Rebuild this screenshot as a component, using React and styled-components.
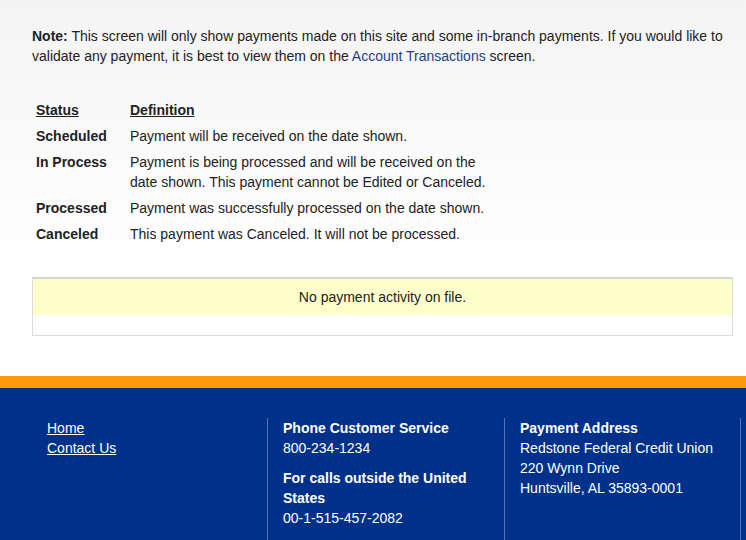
import React from 'react';
import styled, { createGlobalStyle } from 'styled-components';

const GlobalStyle = createGlobalStyle`
  html, body {
    margin: 0;
    padding: 0;
  }
  body {
    font-family: "Liberation Sans", Arial, sans-serif;
    font-size: 14px;
    line-height: 20px;
    color: #222;
    background: #fff;
  }
`;

const Main = styled.main`
  background: linear-gradient(#f4f4f4 0, #ffffff 265px);
  padding: 26px 13px 40px 32px;
`;

const Note = styled.p`
  margin: 0 0 31px 0;

  strong {
    font-weight: 700;
  }

  a {
    color: #1f4287;
    text-decoration: none;
  }
`;

const StatusTable = styled.table`
  border-collapse: collapse;
  width: 462px;
  margin-bottom: 30px;

  th,
  td {
    padding: 3px 4px;
    text-align: left;
    vertical-align: top;
  }

  th {
    font-weight: 700;
    text-decoration: underline;
  }

  td:first-child,
  th:first-child {
    width: 86px;
    font-weight: 700;
  }
`;

const Panel = styled.div`
  border: 1px solid #dcdcdc;
  border-top: 2px solid #d4d4d4;
  background: #fff;
`;

const EmptyRow = styled.div`
  background: #ffffcc;
  height: 36px;
  display: flex;
  align-items: center;
  justify-content: center;
`;

const Spacer = styled.div`
  height: 20px;
`;

const Stripe = styled.div`
  height: 12px;
  background: #fd9a0b;
`;

const Footer = styled.footer`
  background: #00318a;
  color: #fff;
  padding: 30px 0 0 32px;
  height: 152px;
  box-sizing: border-box;
`;

const Columns = styled.div`
  display: grid;
  grid-template-columns: 236px 237px 236px;
  height: 100%;
`;

const Column = styled.div`
  padding: 0 15px;
  border-right: 1px solid #5573b3;
`;

const FooterLink = styled.a`
  display: block;
  color: #fff;
  text-decoration: underline;
`;

const Heading = styled.div`
  font-weight: 700;
  margin-top: ${(p) => (p.$spaced ? '10px' : '0')};
`;

const Line = styled.div``;

const statuses = [
  ['Scheduled', 'Payment will be received on the date shown.'],
  [
    'In Process',
    'Payment is being processed and will be received on the date shown. This payment cannot be Edited or Canceled.',
  ],
  ['Processed', 'Payment was successfully processed on the date shown.'],
  ['Canceled', 'This payment was Canceled. It will not be processed.'],
];

export default function App() {
  return (
    <>
      <GlobalStyle />
      <Main>
        <Note>
          <strong>Note:</strong> This screen will only show payments made on this site and some
          in-branch payments. If you would like to validate any payment, it is best to view them
          on the <a href="#">Account Transactions</a> screen.
        </Note>
        <StatusTable>
          <thead>
            <tr>
              <th>Status</th>
              <th>Definition</th>
            </tr>
          </thead>
          <tbody>
            {statuses.map(([name, def]) => (
              <tr key={name}>
                <td>{name}</td>
                <td>{def}</td>
              </tr>
            ))}
          </tbody>
        </StatusTable>
        <Panel>
          <EmptyRow>No payment activity on file.</EmptyRow>
          <Spacer />
        </Panel>
      </Main>
      <Stripe />
      <Footer>
        <Columns>
          <Column>
            <FooterLink href="#">Home</FooterLink>
            <FooterLink href="#">Contact Us</FooterLink>
          </Column>
          <Column>
            <Heading>Phone Customer Service</Heading>
            <Line>800-234-1234</Line>
            <Heading $spaced>For calls outside the United States</Heading>
            <Line>00-1-515-457-2082</Line>
          </Column>
          <Column>
            <Heading>Payment Address</Heading>
            <Line>Redstone Federal Credit Union</Line>
            <Line>220 Wynn Drive</Line>
            <Line>Huntsville, AL 35893-0001</Line>
          </Column>
        </Columns>
      </Footer>
    </>
  );
}
